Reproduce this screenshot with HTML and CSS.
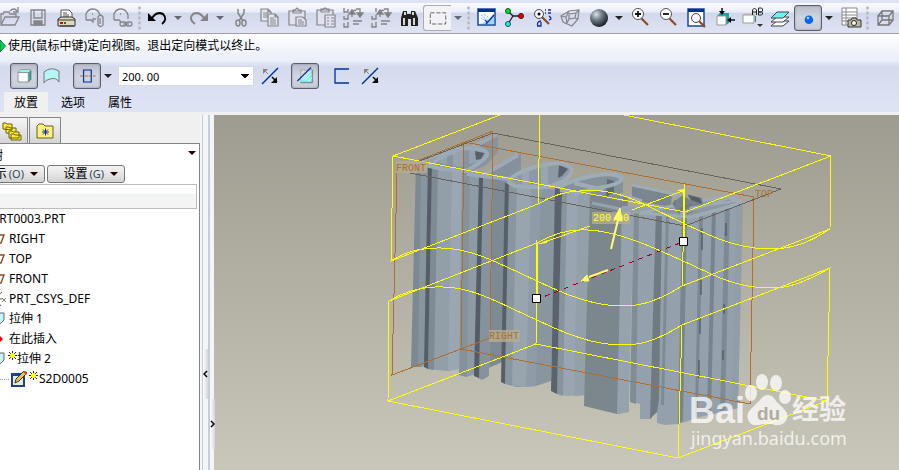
FILE: index.html
```
<!DOCTYPE html>
<html lang="zh-CN">
<head>
<meta charset="utf-8">
<title>PRT0003</title>
<link rel="stylesheet" href="styles.css">
</head>
<body>
<header class="toolbar">
  <button class="tool" aria-label="打开"><svg viewBox="0 0 28 28" fill="none" stroke="#85858a" stroke-width="1.3"><path d="M5 20V10h2l1-2h5l1 2h6v3M5 21l4-8h14l-4 8zM14 7q4-4 7 0M22 3v5h-5"/></svg></button>
  <button class="tool" aria-label="保存"><svg viewBox="0 0 28 28" fill="none" stroke="#858589" stroke-width="1.3"><path d="M7 6h14v15H7zM10 6v8h8V6"/><path d="M10 17h8v4h-8z" fill="#858589"/></svg></button>
  <button class="tool" aria-label="打印"><svg viewBox="0 0 28 28"><path d="M9 14V6h8l3 3v6z" fill="#fff" stroke="#555"/><path d="M11 9h4M11 11h6M11 13h6" stroke="#555"/><path d="M6 15l3-2h11l3 2v7H6z" fill="#ddd9ba" stroke="#333"/><path d="M6 16h17M8 22h14" stroke="#333"/><path d="M8 18h3v2H8z" fill="#e00"/><path d="M12 18h2v2h-2z" fill="#080"/></svg></button>
  <button class="tool" aria-label="附件"><svg viewBox="0 0 28 28" fill="none" stroke="#858589" stroke-width="1.3"><path d="M6 16v-6q2-5 7-5t7 6M6 16h5l2 2v-3h3M12 10h1M18 21v-8q2-4 5 0v8q-2 3-5 0M20 14v6"/></svg></button>
  <button class="tool" aria-label="链接"><svg viewBox="0 0 28 28" fill="none" stroke="#858589" stroke-width="1.3"><path d="M6 16v-6q2-5 7-5t7 6v4M6 16h5l2 2M12 10h1"/><rect x="12" y="18" width="6" height="4" rx="2"/><rect x="18" y="18" width="6" height="4" rx="2"/><path d="M15 20h6"/></svg></button>
  <span class="grip"></span>
  <button class="tool" aria-label="撤消"><svg viewBox="0 0 28 28"><path d="M9 14q5-7 11-4 5 5-1 10" fill="none" stroke="#000" stroke-width="2"/><path d="M5 9v8h8z"/></svg></button>
  <button class="drop" aria-label="撤消列表"><svg viewBox="0 0 14 28" fill="#667"><path d="M3 12h8l-4 4z"/></svg></button>
  <button class="tool" aria-label="重做"><svg viewBox="0 0 28 28"><path d="M19 14q-5-7-11-4-5 5 2 10" fill="none" stroke="#858589" stroke-width="2"/><path d="M23 9v8h-8z" fill="#858589"/></svg></button>
  <button class="drop" aria-label="重做列表"><svg viewBox="0 0 14 28" fill="#667"><path d="M3 12h8l-4 4z"/></svg></button>
  <button class="tool" aria-label="剪切"><svg viewBox="0 0 28 28" fill="none" stroke="#858589" stroke-width="1.5"><path d="M11 5v4l5 8M17 5v4l-5 8"/><ellipse cx="11" cy="19" rx="2" ry="3"/><ellipse cx="17" cy="19" rx="2" ry="3"/></svg></button>
  <button class="tool" aria-label="复制"><svg viewBox="0 0 28 28" fill="#e4e6f0" stroke="#858589" stroke-width="1.2"><path d="M6 5h7l3 3v9H6zM13 5v3h3M8 9h5M8 11h6M8 13h6"/><path d="M13 10h7l3 3v9H13zM20 10v3h3M15 14h4M15 16h6M15 18h6M15 20h6"/></svg></button>
  <button class="tool" aria-label="粘贴"><svg viewBox="0 0 28 28" fill="#e0e3ef" stroke="#858589" stroke-width="1.2"><path d="M6 7h16v14H6zM10 9V6h2l2-2 2 2h2v3z"/><path d="M13 13h7l3 3v6H13zM15 16h4M15 18h6M15 20h6"/></svg></button>
  <button class="tool" aria-label="选择性粘贴"><svg viewBox="0 0 28 28" fill="#e0e3ef" stroke="#858589" stroke-width="1.2"><path d="M6 6h16v15H6zM10 8V5h2l2-1 2 1h2v3z"/><path d="M14 11h10v12H14zM16 14h2M20 14h3M16 17h2M20 17h3M16 20h2M20 20h3"/></svg></button>
  <button class="tool" aria-label="再生"><svg viewBox="0 0 28 28" fill="none" stroke="#858589" stroke-width="1.4"><path d="M5 4v4h4V5M5 12v3h4v-4M5 19v4h4v-5M14 17h9M14 20h6M13 13V8q3-3 4-1M17 5l4 0v7"/><path d="M10 10h6l-3-4zM18 9h6l-3 4z" fill="#777"/></svg></button>
  <button class="tool" aria-label="再生管理器"><svg viewBox="0 0 28 28" fill="none" stroke="#858589" stroke-width="1.4"><path d="M9 4v4M5 12v3h4v-4M5 19v4h4v-5M14 17h9M14 20h6M13 13V8q3-3 4-1M17 5l4 0v7"/><path d="M10 10h6l-3-4zM18 9h6l-3 4z" fill="#777"/></svg></button>
  <button class="tool" aria-label="查找"><svg viewBox="0 0 28 28"><path d="M8 7h4v3h4V7h4l3 7v8h-7v-7h-3v7H6v-8z" fill="#222"/><path d="M10 8v3M18 8v3M9 14v7M19 14v7" stroke="#ddd9c8" stroke-width="2"/></svg></button>
  <button class="tool picker" aria-label="选取框"><svg viewBox="0 0 28 28"><path d="M5 8h18v13H5z" fill="none" stroke="#555" stroke-dasharray="5 2"/></svg></button>
  <button class="drop" aria-label="选取列表"><svg viewBox="0 0 14 28" fill="#667"><path d="M3 12h8l-4 4z"/></svg></button>
  <span class="grip"></span>
  <button class="tool" aria-label="重画"><svg viewBox="0 0 28 28"><path d="M6 5h17v16H6z" fill="#fff" stroke="#174a9b" stroke-width="1.5"/><path d="M22 9v11H7q10-2 15-11z" fill="#9bd9f2"/><path d="M6 5h17v3H6z" fill="#003090"/><path d="M14 20l8-9M13 16l3 3" fill="none" stroke="#113399" stroke-width="1.4"/><path d="M9 11l8 6M9 14l5 3M12 10l5 4" stroke="#29bce8" stroke-dasharray="1 1"/></svg></button>
  <button class="tool" aria-label="旋转中心"><svg viewBox="0 0 28 28"><path d="M8 7l5 5h9M13 12l-5 8" fill="none" stroke="#222" stroke-width="1.3"/><circle cx="8" cy="7" r="2.5" fill="#0d3" stroke="#151"/><circle cx="21" cy="12" r="2.5" fill="#e00" stroke="#411"/><circle cx="8" cy="20" r="2.5" fill="#2ee" stroke="#155"/></svg></button>
  <button class="tool" aria-label="定向模式"><svg viewBox="0 0 28 28"><path d="M14 13l7 7" stroke="#8a4a2b" stroke-width="2.2"/><circle cx="11" cy="10" r="4.5" fill="#f4f5ff" stroke="#444"/><circle cx="11" cy="10" r="1.5"/><path d="M17 6h1m2 0h3m-6 3h1m2 0h3M21 12q4 3 0 4M13 17q-5 1-3 5M9 22h4v-4" fill="none" stroke="#1a2a96" stroke-width="1.3"/></svg></button>
  <button class="tool" aria-label="外观"><svg viewBox="0 0 28 28" fill="none" stroke="#858589" stroke-width="1.2"><path d="M5 12l8-5 10-1-1 9-6 7-9-4zM5 12l5 1 3-6M10 13l1 6M13 10l7-1-1 5-6 1zM20 9l3-3M19 14l3 1M13 15l-2 4"/></svg></button>
  <button class="tool" aria-label="着色"><svg viewBox="0 0 28 28"><defs><radialGradient id="ball" cx=".35" cy=".3" r=".75"><stop offset="0" stop-color="#dde3e6"/><stop offset=".4" stop-color="#75818a"/><stop offset="1" stop-color="#12181c"/></radialGradient></defs><circle cx="15" cy="14" r="9" fill="url(#ball)"/></svg></button>
  <button class="drop" aria-label="着色列表"><svg viewBox="0 0 14 28" fill="#222"><path d="M3 12h8l-4 4z"/></svg></button>
  <button class="tool" aria-label="放大"><svg viewBox="0 0 28 28"><path d="M15 14l7 7" stroke="#8a4a2b" stroke-width="2.2"/><circle cx="12" cy="10" r="5.5" fill="#fff" stroke="#555"/><path d="M9 10h6M12 7v6" stroke="#111" stroke-width="1.8"/></svg></button>
  <button class="tool" aria-label="缩小"><svg viewBox="0 0 28 28"><path d="M15 14l7 7" stroke="#8a4a2b" stroke-width="2.2"/><circle cx="12" cy="10" r="5.5" fill="#fff" stroke="#555"/><path d="M9 10h6" stroke="#111" stroke-width="1.8"/></svg></button>
  <button class="tool" aria-label="重新调整"><svg viewBox="0 0 28 28"><path d="M6 5h16v17H6z" fill="#fff" stroke="#174a9b" stroke-width="1.5"/><path d="M6 5h16v3H6z" fill="#003090"/><path d="M17 17l6 6" stroke="#8a4a2b" stroke-width="2.2"/><circle cx="14" cy="14" r="4.5" fill="#f4f5ff" stroke="#444"/></svg></button>
  <button class="tool" aria-label="重定向"><svg viewBox="0 0 28 28"><path d="M19 9h-9l-3 3v9h9l3-2z" fill="#1aa2a4"/><path d="M7 12h9v9H7z" fill="#fff" stroke="#999"/><path d="M12 4v5M25 16h-5" stroke="#111" stroke-width="1.5"/><path d="M9 7h6l-3 4zM21 13v6l-4-3z"/></svg></button>
  <button class="tool" aria-label="视图列表"><svg viewBox="0 0 28 28"><path d="M5 11l2-2h10v9l-2 2" fill="#ccc"/><path d="M5 11h11v8H5z" fill="#fff" stroke="#999"/><path d="M14.500 11V6l2-2 2 2v5M14.500 8h4M20.500 11V4h3l1 1v2l-1 1h-3 3l1 1v1l-1 1h-3" fill="none" stroke="#222"/><path d="M17.500 12v6" stroke="#287"/><path d="M19 20h6l-3 3z" fill="#333"/></svg></button>
  <button class="tool" aria-label="层"><svg viewBox="0 0 28 28" stroke="#444"><path d="M5 22l6-5h12l-6 5z" fill="#fff"/><path d="M5 18l6-5h12l-6 5z" fill="#fff"/><path d="M5 14l6-6h12l-6 6z" fill="#6ff0f2"/></svg></button>
  <button class="tool pressed" aria-label="显示点"><svg viewBox="0 0 28 28"><circle cx="15" cy="16" r="5" fill="#0566f5"/><circle cx="14" cy="14" r="1.5" fill="#a9ccff"/></svg></button>
  <button class="drop" aria-label="显示列表"><svg viewBox="0 0 14 28" fill="#222"><path d="M3 12h8l-4 4z"/></svg></button>
  <button class="tool" aria-label="视图管理器"><svg viewBox="0 0 28 28"><path d="M6 4h15v17H6z" fill="#fff" stroke="#888"/><path d="M10 4v17M6 8h15M6 11h15M6 14h15M6 17h8" stroke="#888"/><path d="M12 16h3l1-2h4l1 2h4v7H12z" fill="#bbb79e" stroke="#333"/><circle cx="18" cy="19" r="2.5" fill="#fff" stroke="#222"/></svg></button>
  <span class="grip"></span>
  <button class="tool" aria-label="线框"><svg viewBox="0 0 28 28" fill="none" stroke="#777" stroke-width="1.3"><path d="M7 12h11v9H7zM11 7h11v9H11zM7 12l4-5M18 12l4-5M18 21l4-5M7 21l4-5"/></svg></button>
</header>

<p class="message"><svg class="lead" viewBox="0 0 6 12"><path d="M0 0l5.500 6L0 12z" fill="#00d84a" stroke="#174"/></svg>使用(鼠标中键)定向视图。退出定向模式以终止。</p>

<section class="dashboard">
  <div class="controls">
    <button class="tool pressed" aria-label="实体"><svg viewBox="0 0 28 28"><path d="M7 10l3-3h12v11l-3 3z" fill="#23adb0" stroke="#666"/><path d="M7 10l3-3h12l-3 3z" fill="#98f2f2"/><path d="M7 10h12v11H7z" fill="#fff" stroke="#888"/></svg></button>
    <button class="tool" aria-label="曲面"><svg viewBox="0 0 28 28"><path d="M6 21V10q7-6 15-1v11q-3-5-9-3-5 1-6 4z" fill="#b6f5f6" stroke="#777"/></svg></button>
    <span class="space"></span>
    <button class="tool pressed" aria-label="两侧深度"><svg viewBox="0 0 28 28"><path d="M10 7h9v14h-9z" fill="none" stroke="#0030a0" stroke-width="1.4"/><path d="M6 14h18" stroke="#9a5c22" stroke-dasharray="4 1"/></svg></button>
    <button class="drop" aria-label="深度列表"><svg viewBox="0 0 14 28" fill="#222"><path d="M3 12h8l-4 4z"/></svg></button>
    <select class="depth" aria-label="深度"><option>200. 00</option></select>
    <button class="tool" aria-label="反向"><svg viewBox="0 0 28 28"><path d="M6 22L22 6" stroke="#0030a0" stroke-width="1.5"/><path d="M7 7h5l-5 5z" fill="#888577"/><path d="M8 8l4 4" stroke="#888577"/><path d="M16 15l5 5" stroke="#000" stroke-width="1.5"/><path d="M21 15v6h-6z"/></svg></button>
    <span class="space"></span>
    <button class="tool pressed" aria-label="移除材料"><svg viewBox="0 0 28 28"><path d="M9 7h14v15H9z" fill="#dbdcda" stroke="#777" stroke-dasharray="1 1"/><path d="M22 7v15H9v-2L21 7z" fill="#7ff1f5"/><path d="M22.500 7v14.500H9" fill="none" stroke="#777"/><path d="M14 19l7-7M18 20l4-4M12 18l8-9" stroke="#fff"/><path d="M5 20L21 4" stroke="#0030a0" stroke-width="1.5"/></svg></button>
    <span class="space"></span>
    <button class="tool" aria-label="加厚"><svg viewBox="0 0 28 28"><path d="M23 7H9v14h14" fill="none" stroke="#0030a0" stroke-width="1.3"/></svg></button>
    <button class="tool" aria-label="反向侧"><svg viewBox="0 0 28 28"><path d="M8 22L24 6" stroke="#0030a0" stroke-width="1.5"/><path d="M10 7h5l-5 5z" fill="#888577"/><path d="M11 8l4 4" stroke="#888577"/><path d="M19 15l5 5" stroke="#000" stroke-width="1.5"/><path d="M24 15v6h-6z"/></svg></button>
  </div>
  <nav class="tabs">
    <button class="tab active">放置</button>
    <button class="tab">选项</button>
    <button class="tab">属性</button>
  </nav>
</section>

<main class="workspace">
  <aside class="side">
    <div class="foldertabs">
      <button class="foldertab" aria-label="文件夹浏览器"><svg viewBox="0 0 22 22" fill="#ffee2e" stroke="#665f20"><path d="M2 9V3h3l1 1h5v6zM5 13V7h3l1 1h6v6z"/><path d="M8 17v-6h3l1 1h6v6H8zM10 20v-6h3l1 1h6v5z"/></svg></button>
      <button class="foldertab" aria-label="收藏夹"><svg viewBox="0 0 22 22"><path d="M3 18V6l2-2h4l2 2h8v12z" fill="#fff17a" stroke="#665f20"/><path d="M8 12h7M11.500 8.500v7M9 9.500l5 5M14 9.500l-5 5" stroke="#0a2fa8"/></svg></button>
    </div>
    <div class="panel">
      <div class="panelhead"><span class="paneltitle">模型树</span><svg class="caret" viewBox="0 0 8 4"><path d="M0 0h8L4 4z" fill="#200"/></svg></div>
      <div class="actions">
        <button class="action">显示<span class="key">(O)</span><svg class="caret" viewBox="0 0 8 4"><path d="M0 0h8L4 4z" fill="#200"/></svg></button>
        <button class="action">设置<span class="key">(G)</span><svg class="caret" viewBox="0 0 8 4"><path d="M0 0h8L4 4z" fill="#200"/></svg></button>
      </div>
      <div class="columnhead"></div>
      <ul class="tree">
        <li class="root">PRT0003.PRT</li>
        <li><svg class="node" viewBox="0 0 16 16"><path d="M3 4h9l-3 8H2z" fill="none" stroke="#8c4b22" stroke-width="1.400"/></svg>RIGHT</li>
        <li><svg class="node" viewBox="0 0 16 16"><path d="M3 4h9l-3 8H2z" fill="none" stroke="#8c4b22" stroke-width="1.400"/></svg>TOP</li>
        <li><svg class="node" viewBox="0 0 16 16"><path d="M3 4h9l-3 8H2z" fill="none" stroke="#8c4b22" stroke-width="1.400"/></svg>FRONT</li>
        <li><svg class="node" viewBox="0 0 16 16" fill="none" stroke="#8c4b22"><path d="M7 1v14M2 8h8M5 5l5-4M5 10l4 5"/><path d="M10 7l4 4M14 7l-4 4" stroke="#777"/></svg>PRT_CSYS_DEF</li>
        <li><svg class="node" viewBox="0 0 16 16"><path d="M3 5l3-3h6v7l-5 5" fill="#c9f4f3" stroke="#567"/></svg>拉伸 1</li>
        <li><svg class="node" viewBox="0 0 16 16"><path d="M2 7h5V4l4 4-4 4V9H2z" fill="#e00"/></svg>在此插入</li>
        <li class="fresh"><svg class="node" viewBox="0 0 16 16"><path d="M3 5l3-3h6v7l-5 5" fill="#c9f4f3" stroke="#567"/></svg><svg class="spark" viewBox="0 0 9 16"><path d="M1 1l7 7M8 1L1 8M4.500 0v9M0 4.500h9" stroke="#222"/><circle cx="4.500" cy="4.500" r="2.500" fill="#ff0"/></svg>拉伸 2</li>
        <li class="child"><svg class="sketch" viewBox="0 0 18 16"><path d="M2 3h12v12H2z" fill="#e9ead8" stroke="#223f86" stroke-width="2"/><path d="M1 2h12v3H1z" fill="#1a3f99"/><path d="M5 12l1-4 8-8 3 2-8 8z" fill="#e8c747" stroke="#333"/><path d="M13 1l2-1 2 2-1 2z" fill="#d43"/></svg><svg class="spark" viewBox="0 0 9 16"><path d="M1 1l7 7M8 1L1 8M4.500 0v9M0 4.500h9" stroke="#222"/><circle cx="4.500" cy="4.500" r="2.500" fill="#ff0"/></svg>S2D0005</li>
      </ul>
    </div>
  </aside>
  <div class="splitter">
    <div class="rail left"><button class="handle" aria-label="折叠"><svg viewBox="0 0 5 8"><path d="M4 1L1 4l3 3" fill="none" stroke="#000" stroke-width="1.500"/></svg></button></div>
    <div class="rail right"><button class="handle" aria-label="展开"><svg viewBox="0 0 5 8"><path d="M1 1l3 3-3 3" fill="none" stroke="#000" stroke-width="1.500"/></svg></button></div>
  </div>
  <div class="viewport">
    <svg class="scene" viewBox="214 115 685 355" preserveAspectRatio="xMinYMin slice">
      <!-- column walls, left to right -->
      <g>
        <path d="M416 164L429 160 425 365 421 367 411 367z" fill="#7c8991"/>
        <path d="M421 163L429 160 425 365 418 367z" fill="#88959f"/>
        <path d="M432 160H462L458 369 447 371 428 369z" fill="#929fa9"/>
        <path d="M432 166L438 168 434 370 428 369z" fill="#7f8b94"/>
        <path d="M452 170L462 173 459 369 448 371z" fill="#9aa7b2"/>
        <path d="M428 164L432 166 428 369 424 367z" fill="#555d66"/>
        <path d="M462 172L480 176 475 374 466 377 459 375z" fill="#85929c"/>
        <path d="M470 172L480 174 475 374 467 376z" fill="#8e9ba5"/>
        <path d="M482 177L507 182 502 362 489 368V376L482 380 478 378z" fill="#86939e"/>
        <path d="M493 178L507 182 502 362 490 367z" fill="#7d8993"/>
        <path d="M479 175L483 177 479 378 474 376z" fill="#545c65"/>
        <path d="M509 182L556 190 551 381 536 386 516 387 505 384z" fill="#8996a0"/>
        <path d="M517 184L535 187 530 386 512 386z" fill="#98a5af"/>
        <path d="M531 187L541 189 536 386 526 387z" fill="#8f9ca7"/>
        <path d="M505 180L509 182 505 384 501 382z" fill="#565e67"/>
        <path d="M562 190L592 195 586 395 567 396 557 394z" fill="#99a6b1"/>
        <path d="M562 190L567 192 563 396 557 394z" fill="#87939d"/>
        <path d="M578 192L592 194 586 395 574 396z" fill="#93a0aa"/>
        <path d="M555 187L562 190 557 394 551 391z" fill="#5a626b"/>
        <path d="M590 195H628L622 413 617 414 584 406z" fill="#7b868d"/>
        <path d="M634 208L742 201 738 408 718 413 700 417 685 422 677 424 665 425 657 423V404L651 419 640 419V404L630 401z" fill="#94a1ac"/>
        <path d="M622 206H634L629 402V412L617 414z" fill="#96a3ae"/>
        <path d="M634 210L639 211 636 404 630 402z" fill="#818d96"/>
        <path d="M656 210L662 211 659 400 657 412 650 419z" fill="#707a82"/>
        <path d="M666 212L669 212 664 405 661 405z" fill="#7f8b93"/>
        <path d="M682 215L687 214 683 421 678 424z" fill="#79858d"/>
        <path d="M699 215L703 214 698 407 695 417z" fill="#7c878f"/>
        <path d="M712 208L716 207 711 412 707 413z" fill="#78848c"/>
        <path d="M725 205L730 204 725 410 720 411z" fill="#7e8a93"/>
        <path d="M736 205L743 203 738 408 732 409z" fill="#919ea8"/>
        <path d="M702 228V250M701 280V295M700 318V334M699 360V378M726 223V236M724 304V314M723 350V360" stroke="#414950" fill="none"/>
      </g>
      <!-- top faces of the letters -->
      <g stroke-linejoin="round">
        <path d="M478 147L498 136V152L486 165 470 172z" fill="#87939e"/>
        <path d="M472 147L497 135" stroke="#9ca9b4" stroke-width="3"/>
        <path d="M434 166Q430 157 452 149L482 147Q496 151 482 161L463 171z" fill="#8592a0"/>
        <path d="M439 163Q438 155 460 150L484 150 480 161 460 167z" fill="#96a3ae"/>
        <path d="M447 165V155L453 152V166zM463 167V150H469V165z" fill="#8793a0"/>
        <path d="M475 151L484 153 481 159 476 160z" fill="#58616a"/>
        <path d="M417 164Q445 148 475 148 497 151 479 163L467 171 443 169 425 165M434 165Q433 159 456 151" fill="none" stroke="#9caab5" stroke-width="4"/>
        <path d="M486 175L518 155 521 153V176L508 184z" fill="#85919c"/>
        <path d="M467 174L482 176 518 155M482 176L510 179" fill="none" stroke="#9caab5" stroke-width="4"/>
        <path d="M511 181Q512 173 530 168 560 160 570 167 574 174 561 181L540 190z" fill="#8d99a4"/>
        <path d="M522 184V173L529 170V185zM541 187V166L548 165V185z" fill="#99a6b1"/>
        <path d="M559 165L568 169 562 176 558 178z" fill="#58616a"/>
        <path d="M508 182Q512 174 538 166 565 160 571 168 574 174 563 181 549 189 535 187L515 186 508 182" fill="none" stroke="#9eacb6" stroke-width="4"/>
        <path d="M561 190Q562 184 590 177 610 173 623 178V202L600 196z" fill="#84909a"/>
        <path d="M607 179L614 181V192L606 197z" fill="#606a72"/>
        <path d="M559 189Q562 183 588 177 612 171 622 178 621 184 603 187L578 193 560 190M574 183L604 190" fill="none" stroke="#9eacb6" stroke-width="4"/>
        <path d="M592 203L635 212 680 212" fill="none" stroke="#95a3ae" stroke-width="3"/>
        <path d="M632 186L672 193 671 207 632 200z" fill="#7b878f"/>
        <path d="M632 185L684 196M620 194L642 201M641 213L690 202 727 197 743 203 690 217z" fill="#8c99a4" stroke="#9eacb6" stroke-width="3"/>
        <path d="M672 203L683 195 690 200 702 198 703 204 690 207 680 215z" fill="#77838c"/>
        <path d="M688 195L700 198 702 204 691 200zM675 200L674 206M680 209L692 204M687 214L703 206" fill="#535d66" stroke="#66717a"/>
        <path d="M690 208L742 200M680 214L727 199M696 217L738 203" fill="none" stroke="#9eacb6" stroke-width="2"/>
      </g>
      <g class="datum" fill="none">
        <path d="M417 161L493 131 490 338 392 375 397 173M464 142L461 349 750 404 754 197z" stroke="#ad7030"/>
        <path d="M417 162L493 133 781 189 685 226 410 173" stroke="#67625c"/>
      </g>
      <g class="cage" fill="none" stroke="#ffff00">
        <path d="M500 115L393 156 391 261 538 204 540 115M393 156L685 212 831 156 624 115M831 156L830 229"/>
        <path d="M538 204Q560 191 580 191 611 187 650 207C698 230 730 249 770 249 796 249 813 240 830 229"/>
        <path d="M391 261Q410 248 437 248C470 247 498 263 537 281 582 303 605 306 625 306 645 306 663 298 682 286L830 229"/>
        <path d="M389 301L537 243Q560 230 580 230C615 228 660 250 711 274 735 285 752 288 773 288 793 288 812 278 830 268L827 401"/>
        <path d="M389 301Q410 288 435 287C472 285 500 304 537 320 582 342 604 345 625 345 645 345 662 337 682 325L830 268"/>
        <path d="M389 301L388 401 678 458 827 401 536 344 388 401M537 240L536 344M682 325L678 458M590 226L539 244M632 210L685 190M685 184L682 286"/>
        <path d="M537 242V298M684 189V241" stroke-width="2"/>
      </g>
      <path class="datum" d="M680 243L543 297" stroke="#a00030" stroke-dasharray="5 5"/>
      <path d="M539 244l8-4v3zM685 189l-8 1 6 3z" fill="#ffff30"/>
      <g class="tags">
        <path d="M396 161h31v12h-31zM489 330h31v12h-31zM592 212h38v12h-38z" fill="#b6ad93" opacity=".8"/>
        <text x="396" y="171">FRONT</text><text x="489" y="339">RIGHT</text><text x="755" y="197">TOP</text>
        <text x="593" y="221" class="value">200.00</text>
      </g>
      <g fill="#ffff68" stroke="#ffff68"><path d="M611 249L618 220M608 270L589 277" stroke-width="2"/><path d="M620 208l2 13-8-2zM581 281l6-6 2 6z"/></g>
      <path d="M679.500 237.500h8v8h-8zM532.500 294.500h8v8h-8z" fill="#fff" stroke="#000"/>
      <g class="mark">
        <ellipse cx="751" cy="393" rx="6" ry="8"/><ellipse cx="762" cy="382" rx="6" ry="8"/><ellipse cx="776" cy="383" rx="6" ry="8"/><ellipse cx="785" cy="397" rx="6" ry="7"/>
        <path d="M768 395q5 0 8 6l8 8q7 7 0 14-5 4-12 1h-9q-9 3-13-1-6-8 2-15l8-8q3-5 8-5z"/>
        <text x="689" y="423" class="brand">Bai</text><text x="757" y="420" class="paw">du</text><text x="792" y="419" class="word">经验</text><text x="691" y="445" class="site">jingyan.baidu.com</text>
      </g>
    </svg>
  </div>
</main>
</body>
</html>
```
FILE: styles.css
```
* { box-sizing: border-box; }
body {
  margin: 0;
  height: 100vh;
  display: flex;
  flex-direction: column;
  overflow: hidden;
  background: #f0f0f0;
  color: #000;
  font: 12px/20px "Noto Sans", "Noto Sans CJK SC", sans-serif;
}
button { padding: 0; border: 0; background: none; font: inherit; color: inherit; }
svg { display: block; flex: none; }

.toolbar {
  display: flex;
  flex: none;
  height: 34px;
  margin-left: -4px;
  align-items: center;
  overflow: hidden;
  border-top: 3px solid #dde3f3;
  border-bottom: 1px solid #a49dad;
  background: linear-gradient(#fafbfe, #e9edf8 30%, #d2d8eb 34%, #dfe4f4);
}
.tool, .drop { flex: none; height: 28px; }
.tool { width: 28px; }
.drop { width: 14px; }
.tool svg { width: 28px; height: 28px; }
.drop svg { width: 14px; height: 28px; }
.grip {
  flex: none;
  width: 7px;
  height: 26px;
  background: radial-gradient(circle, #b5b9c6 1px, transparent 2px) center / 7px 5px;
}
.picker { height: 26px; border: 1px solid #aaacb4; border-right: 0; border-radius: 3px 0 0 3px; background: #f3f3f5; }
.picker svg { height: 24px; }
.pressed {
  height: 26px;
  border: 1px solid #5b5f6b;
  border-radius: 3px;
  background: linear-gradient(#b9bdca, #d2d6e2 50%, #c7ccda);
  box-shadow: inset 0 0 2px #80859a;
}
.pressed svg { width: 26px; height: 24px; }

.message {
  display: flex;
  flex: none;
  gap: 2px;
  align-items: center;
  height: 28px;
  margin: 0;
  padding-bottom: 4px;
  background: linear-gradient(#fff, #e9edf8);
}
.lead { width: 6px; height: 12px; }

.dashboard { flex: none; background: linear-gradient(#e4e9f6, #d5dbee 10%, #dfe4f5); }
.controls { display: flex; height: 28px; padding-left: 10px; align-items: center; }
.space { width: 7px; }
.depth {
  width: 136px;
  height: 20px;
  margin: 0 2px 0 3px;
  padding: 0 3px;
  border: 1px solid #d5d9e2;
  border-radius: 0;
  appearance: none;
  background: linear-gradient(45deg, transparent 50%, #000 50%) right 8px center / 4px 4px no-repeat, linear-gradient(-45deg, transparent 50%, #000 50%) right 4px center / 4px 4px no-repeat, #fff;
  color: #000;
  font: 11px "Noto Sans", sans-serif;
}
.tabs { display: flex; gap: 3px; padding: 2px 4px 0; }
.tab { width: 44px; height: 20px; line-height: 19px; }
.active { background: #f0f0f0; }

.workspace { display: flex; flex: 1; min-height: 0; padding-top: 3px; }
.side { display: flex; flex: none; flex-direction: column; width: 200px; overflow: hidden; }
.foldertabs { display: flex; gap: 1px; padding-top: 2px; margin-left: -4px; }
.foldertab {
  display: grid;
  place-items: center;
  width: 32px;
  height: 26px;
  border: 1px solid #85858c;
  border-bottom: 0;
  background: linear-gradient(#f5f5f5, #d5d5d5);
}
.foldertab svg { width: 22px; height: 22px; }
.panel { flex: 1; padding-right: 2px; border: solid #85858c; border-width: 1px 1px 0 0; background: #fff; }
.panelhead { display: flex; justify-content: space-between; height: 21px; padding-right: 1px; margin-left: -33px; }
.paneltitle { line-height: 24px; }
.caret { width: 8px; height: 4px; }
.panelhead .caret { margin-top: 7px; }
.actions { display: flex; gap: 2px; margin-left: -33px; }
.action {
  display: flex;
  gap: 4px;
  align-items: center;
  justify-content: flex-end;
  width: 78px;
  height: 18px;
  padding-right: 6px;
  border: 1px solid #777;
  border-radius: 3px;
  background: linear-gradient(#f3f3f3, #e7e7e7 45%, #d2d2d2);
}
.key { margin: 0 2px 0 -2px; font-size: 11px; color: #345; }
.columnhead { height: 25px; margin-top: 1px; border: solid #bbb; border-width: 1px 1px 1px 0; background: linear-gradient(#fff 35%, #f2f3f4 40%, #f5f5f5); }
.tree { margin: 0 0 0 -8px; padding: 0; list-style: none; }
.tree li { display: flex; gap: 1px; height: 20px; align-items: center; white-space: nowrap; }
.node { width: 16px; height: 16px; }
.spark { width: 9px; height: 16px; }
.tree .fresh { gap: 0; }
.tree .child { gap: 1px; padding-left: 17px; background: linear-gradient(90deg, #aaa 50%, transparent 50%) 8px 10px / 2px 1px repeat-x; background-clip: content-box; }
.sketch { width: 18px; height: 16px; }
.tree .child { background: none; }
.tree .child::before { content: ""; width: 10px; margin-left: -10px; border-top: 1px dotted #999; }

.splitter { display: flex; flex: none; width: 14px; padding-left: 2px; background: #f4f5f6; }
.rail { position: relative; width: 6px; border-left: 1px solid #bccddd; }
.rail.right { border-left: 2px solid #c2cfdd; }
.handle { position: absolute; left: 0; top: 66%; width: 5px; height: 50px; background: linear-gradient(90deg, #fff, #d5d5d8); }
.right .handle { top: 80%; }
.handle svg { width: 5px; height: 8px; }

.viewport { flex: 1; min-width: 0; overflow: hidden; background: linear-gradient(#9e9b90, #c9c6ba); }
.scene { width: 100%; height: 100%; }
.datum, .cage { shape-rendering: crispEdges; }
.tags { font: 10px "Liberation Mono", monospace; fill: #ad7030; }
.value { fill: #ffff30; }
.mark { fill: #fff; opacity: .75; }
.brand { font: bold 36px "Liberation Sans", sans-serif; }
.paw { font: bold 19px "Liberation Sans", sans-serif; fill: #aaa698; }
.word { font: bold 27px "Noto Sans CJK SC", sans-serif; }
.site { font: 18px "Noto Sans", sans-serif; }
```
